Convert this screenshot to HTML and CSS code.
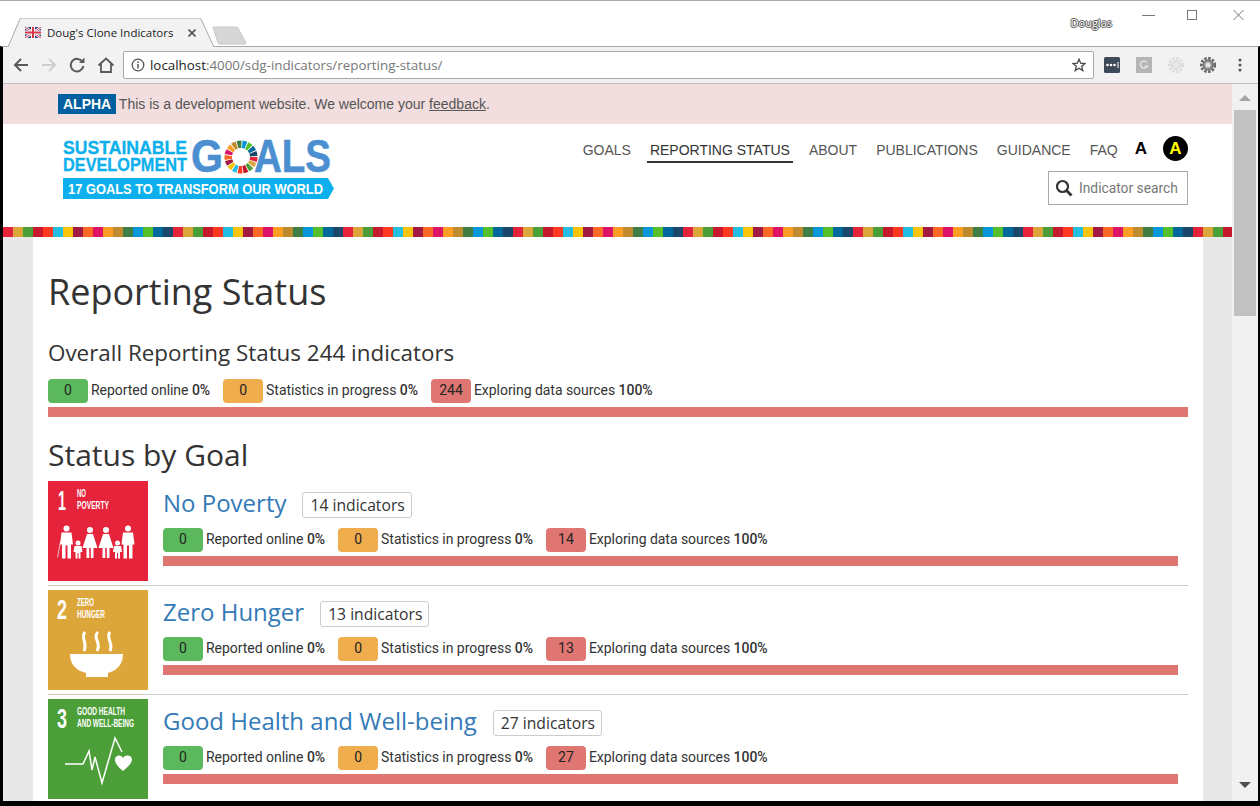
FILE: index.html
```html
<!DOCTYPE html>
<html lang="en">
<head>
    <meta charset="UTF-8">
    <title>Doug's Clone Indicators</title>
    <link rel="stylesheet" href="styles.css">
</head>
<body>

<div class="tabstrip">
    <div class="tab">
        <svg class="tab-shape" width="210" height="30" viewBox="0 0 210 30"><path d="M0 29 L12 1 Q12.500 0 14 0 L191 0 Q192.500 0 193 1 L206 29" fill="#f2f2f2" stroke="#a9a9a9"/></svg>
        <svg class="flag" width="16" height="11" viewBox="0 0 16 11">
            <rect width="16" height="11" fill="#2b3f86"/>
            <path d="M0 0 L16 11 M16 0 L0 11" stroke="#fff" stroke-width="2.500"/>
            <path d="M0 0 L16 11 M16 0 L0 11" stroke="#d8384a" stroke-width="1"/>
            <path d="M8 0 V11 M0 5.500 H16" stroke="#fff" stroke-width="4"/>
            <path d="M8 0 V11 M0 5.500 H16" stroke="#d8384a" stroke-width="2"/>
        </svg>
        <span class="tab-title">Doug's Clone Indicators</span>
        <svg class="tab-close" width="8" height="8" viewBox="0 0 8 8"><path d="M0.500 0.500 L7.500 7.500 M7.500 0.500 L0.500 7.500" stroke="#555" stroke-width="1.600"/></svg>
    </div>
    <svg class="newtab" width="36" height="20" viewBox="0 0 36 20"><path d="M1 1 L24 1 Q25 1 26 2 L34 17 Q34 18 33 18 L8 18 Q6 18 6 17 Z" fill="#d6d6d6" stroke="#c8c8c8"/></svg>
    <span class="user">Douglas</span>
    <div class="winctl">
        <svg width="14" height="12" viewBox="0 0 14 12"><path d="M0 6.500 H13" stroke="#777"/></svg>
        <svg class="win-max" width="11" height="12" viewBox="0 0 11 12"><rect x="0.500" y="1.500" width="9" height="9" fill="none" stroke="#777"/></svg>
        <svg class="win-close" width="11" height="12" viewBox="0 0 11 12"><path d="M0.500 1 L10.500 11 M10.500 1 L0.500 11" stroke="#777"/></svg>
    </div>
</div>

<div class="window">
    <div class="toolbar">
        <svg class="tool" width="16" height="16" viewBox="0 0 16 16"><path d="M15 8 H2 M8 2 L2 8 L8 14" fill="none" stroke="#5a5a5a" stroke-width="2"/></svg>
        <svg class="tool" width="16" height="16" viewBox="0 0 16 16"><path d="M1 8 H14 M8 2 L14 8 L8 14" fill="none" stroke="#cfcfcf" stroke-width="2"/></svg>
        <svg class="tool" width="16" height="16" viewBox="0 0 16 16"><path d="M13.500 5 A6.300 6.300 0 1 0 14.300 9" fill="none" stroke="#5a5a5a" stroke-width="2"/><path d="M10 6 H15.500 V0.500 Z" fill="#5a5a5a"/></svg>
        <svg class="tool" width="18" height="16" viewBox="0 0 18 16"><path d="M1.500 8.500 L9 1.500 L16.500 8.500 M4 7 V15 H14 V7" fill="none" stroke="#5a5a5a" stroke-width="1.800"/></svg>
        <div class="omnibox">
            <svg width="14" height="14" viewBox="0 0 14 14"><circle cx="7" cy="7" r="5.800" fill="none" stroke="#555" stroke-width="1.300"/><path d="M7 6 V10.500 M7 3.500 V5" stroke="#555" stroke-width="1.500"/></svg>
            <span class="url"><span class="url-host">localhost</span>:4000/sdg-indicators/reporting-status/</span>
            <svg class="star" width="14" height="14" viewBox="0 0 14 14"><path d="M7 1.200 L8.700 5.200 L13 5.500 L9.700 8.300 L10.800 12.600 L7 10.300 L3.200 12.600 L4.300 8.300 L1 5.500 L5.300 5.200 Z" fill="none" stroke="#444" stroke-width="1.300"/></svg>
        </div>
        <div class="extensions">
            <svg width="16" height="16" viewBox="0 0 16 16"><rect width="16" height="16" rx="1.500" fill="#3d4a5a"/><circle cx="3.500" cy="8" r="1.300" fill="#fff"/><circle cx="7" cy="8" r="1.300" fill="#fff"/><circle cx="10.500" cy="8" r="1.300" fill="#fff"/><path d="M14 5 V11" stroke="#fff"/></svg>
            <svg width="16" height="16" viewBox="0 0 16 16"><rect width="16" height="16" fill="#b5b5b5"/><path d="M11 5.500 A3.600 3.600 0 1 0 11.400 9 H8.500" fill="none" stroke="#eee" stroke-width="1.200"/></svg>
            <svg width="16" height="16" viewBox="0 0 16 16"><circle cx="8" cy="8" r="6.800" fill="none" stroke="#dcdcdc" stroke-width="2.600" stroke-dasharray="2.500 1.500"/><circle cx="8" cy="8" r="4.500" fill="#e6e6e6" stroke="#d4d4d4"/></svg>
            <svg width="16" height="16" viewBox="0 0 16 16"><circle cx="8" cy="8" r="6.800" fill="none" stroke="#666" stroke-width="2.600" stroke-dasharray="2.500 1.500"/><circle cx="8" cy="8" r="5" fill="#9a9a9a" stroke="#555"/><circle cx="8" cy="8" r="2.500" fill="#e4e4e4"/></svg>
            <svg class="dots" width="4" height="14" viewBox="0 0 4 14"><circle cx="2" cy="2" r="1.500" fill="#555"/><circle cx="2" cy="7" r="1.500" fill="#555"/><circle cx="2" cy="12" r="1.500" fill="#555"/></svg>
        </div>
    </div>

    <div class="viewport">
        <div class="page">
            <div class="alpha-banner"><span class="alpha-label">ALPHA</span> This is a development website. We welcome your <a href="#">feedback</a>.</div>

            <header class="site-header">
                <svg class="logo" width="272" height="62" viewBox="0 0 272 62">
                    <text class="logo-small" x="0" y="16" textLength="124" lengthAdjust="spacingAndGlyphs">SUSTAINABLE</text>
                    <text class="logo-small" x="0" y="33" textLength="124" lengthAdjust="spacingAndGlyphs">DEVELOPMENT</text>
                    <text class="logo-big" x="128" y="34" textLength="32" lengthAdjust="spacingAndGlyphs">G</text>
                    <text class="logo-big" x="191" y="34" textLength="77" lengthAdjust="spacingAndGlyphs">ALS</text>
                    <g transform="translate(178 19)" fill="none" stroke-width="7.500" stroke-dasharray="3.900 76.200">
                        <circle r="12.750" stroke="#e5243b" transform="rotate(0)"/>
                        <circle r="12.750" stroke="#dda63a" transform="rotate(21.200)"/>
                        <circle r="12.750" stroke="#4c9f38" transform="rotate(42.400)"/>
                        <circle r="12.750" stroke="#c5192d" transform="rotate(63.500)"/>
                        <circle r="12.750" stroke="#ff3a21" transform="rotate(84.700)"/>
                        <circle r="12.750" stroke="#26bde2" transform="rotate(105.900)"/>
                        <circle r="12.750" stroke="#fcc30b" transform="rotate(127.100)"/>
                        <circle r="12.750" stroke="#a21942" transform="rotate(148.200)"/>
                        <circle r="12.750" stroke="#fd6925" transform="rotate(169.400)"/>
                        <circle r="12.750" stroke="#dd1367" transform="rotate(190.600)"/>
                        <circle r="12.750" stroke="#fd9d24" transform="rotate(211.800)"/>
                        <circle r="12.750" stroke="#bf8b2e" transform="rotate(232.900)"/>
                        <circle r="12.750" stroke="#3f7e44" transform="rotate(254.100)"/>
                        <circle r="12.750" stroke="#0a97d9" transform="rotate(275.300)"/>
                        <circle r="12.750" stroke="#56c02b" transform="rotate(296.500)"/>
                        <circle r="12.750" stroke="#00689d" transform="rotate(317.600)"/>
                        <circle r="12.750" stroke="#19486a" transform="rotate(338.800)"/>
                    </g>
                    <path d="M0 40 H265 L271 50.500 L265 61 H0 Z" fill="#0db0ec"/>
                    <text class="logo-strap" x="5" y="56" textLength="255" lengthAdjust="spacingAndGlyphs">17 GOALS TO TRANSFORM OUR WORLD</text>
                </svg>
                <div class="header-right">
                    <nav class="nav">
                        <a href="#">Goals</a>
                        <a href="#" class="active">Reporting Status</a>
                        <a href="#">About</a>
                        <a href="#">Publications</a>
                        <a href="#">Guidance</a>
                        <a href="#">FAQ</a>
                        <span class="contrast-a">A</span>
                        <span class="contrast-b">A</span>
                    </nav>
                    <div class="search-box">
                        <svg width="18" height="18" viewBox="0 0 18 18"><circle cx="7.500" cy="7.500" r="5.500" fill="none" stroke="#333" stroke-width="2.200"/><path d="M11.500 11.500 L16.500 16.500" stroke="#333" stroke-width="2.800"/></svg>
                        <span>Indicator search</span>
                    </div>
                </div>
            </header>

            <div class="goal-stripe"></div>

            <main class="content">
                <h1>Reporting Status</h1>

                <h3>Overall Reporting Status 244 indicators</h3>
                <div class="status-row">
                    <span class="count green">0</span><span class="status-text">Reported online <b>0%</b></span>
                    <span class="count amber">0</span><span class="status-text">Statistics in progress <b>0%</b></span>
                    <span class="count red">244</span><span class="status-text">Exploring data sources <b>100%</b></span>
                </div>
                <div class="bar"></div>

                <h2>Status by Goal</h2>

                <div class="goal-row">
                    <svg class="tile" width="100" height="100" viewBox="0 0 100 100">
                        <rect width="100" height="100" fill="#e5243b"/>
                        <text class="tile-num" x="10" y="29" textLength="8" lengthAdjust="spacingAndGlyphs">1</text>
                        <text class="tile-name" x="29" y="16" textLength="9" lengthAdjust="spacingAndGlyphs">NO</text>
                        <text class="tile-name" x="29" y="28" textLength="32" lengthAdjust="spacingAndGlyphs">POVERTY</text>
                        <g fill="#fff">
                            <g transform="translate(18.500 47.500)"><circle r="3"/><path d="M-5 4 H5 L6.500 16 H4.500 V30 H1 V17 H-1 V30 H-4.500 V16 H-6.500 Z"/><path d="M-6 13 L-9 29" stroke="#fff" stroke-width="0.700"/></g>
                            <g transform="translate(30 62)"><circle r="2.500"/><path d="M-3.500 3 H3.500 L4.500 9 H2.500 V15.500 H0.500 V10 H-0.500 V15.500 H-2.500 V9 H-4.500 Z"/></g>
                            <g transform="translate(42 49)"><circle r="3"/><path d="M-3 4 H3 L7.500 18 H3.500 V28 H0.800 V18 H-0.800 V28 H-3.500 V18 H-7.500 Z"/></g>
                            <g transform="translate(58 49)"><circle r="3"/><path d="M-3 4 H3 L7.500 18 H3.500 V28 H0.800 V18 H-0.800 V28 H-3.500 V18 H-7.500 Z"/></g>
                            <g transform="translate(69.500 62)"><circle r="2.500"/><path d="M-3.500 3 H3.500 L4.500 9 H2.500 V15.500 H0.500 V10 H-0.500 V15.500 H-2.500 V9 H-4.500 Z"/></g>
                            <g transform="translate(80 47.500)"><circle r="3"/><path d="M-5 4 H5 L6.500 16 H4.500 V30 H1 V17 H-1 V30 H-4.500 V16 H-6.500 Z"/></g>
                        </g>
                    </svg>
                    <div class="goal-body">
                        <div class="goal-head"><a href="#" class="goal-title">No Poverty</a><span class="goal-count">14 indicators</span></div>
                        <div class="status-row">
                            <span class="count green">0</span><span class="status-text">Reported online <b>0%</b></span>
                            <span class="count amber">0</span><span class="status-text">Statistics in progress <b>0%</b></span>
                            <span class="count red">14</span><span class="status-text">Exploring data sources <b>100%</b></span>
                        </div>
                        <div class="bar"></div>
                    </div>
                </div>

                <div class="goal-row">
                    <svg class="tile" width="100" height="100" viewBox="0 0 100 100">
                        <rect width="100" height="100" fill="#dda63a"/>
                        <text class="tile-num" x="9" y="29" textLength="10" lengthAdjust="spacingAndGlyphs">2</text>
                        <text class="tile-name" x="29" y="16" textLength="17" lengthAdjust="spacingAndGlyphs">ZERO</text>
                        <text class="tile-name" x="29" y="28" textLength="28" lengthAdjust="spacingAndGlyphs">HUNGER</text>
                        <path d="M22 64 H75 C75 76 67 81 60 83 V87 H38 V83 C30 81 22 76 22 64 Z" fill="#fff"/>
                        <path d="M37 42 C32 48 40 53 36 61 M50 42 C44 48 54 53 49 61 M62 42 C57 48 66 53 62 61" fill="none" stroke="#fff" stroke-width="3"/>
                    </svg>
                    <div class="goal-body">
                        <div class="goal-head"><a href="#" class="goal-title">Zero Hunger</a><span class="goal-count">13 indicators</span></div>
                        <div class="status-row">
                            <span class="count green">0</span><span class="status-text">Reported online <b>0%</b></span>
                            <span class="count amber">0</span><span class="status-text">Statistics in progress <b>0%</b></span>
                            <span class="count red">13</span><span class="status-text">Exploring data sources <b>100%</b></span>
                        </div>
                        <div class="bar"></div>
                    </div>
                </div>

                <div class="goal-row">
                    <svg class="tile" width="100" height="100" viewBox="0 0 100 100">
                        <rect width="100" height="100" fill="#4c9f38"/>
                        <text class="tile-num" x="9" y="29" textLength="10" lengthAdjust="spacingAndGlyphs">3</text>
                        <text class="tile-name" x="29" y="16" textLength="48" lengthAdjust="spacingAndGlyphs">GOOD HEALTH</text>
                        <text class="tile-name" x="29" y="28" textLength="57" lengthAdjust="spacingAndGlyphs">AND WELL-BEING</text>
                        <path d="M17 65 H35 L41 52 L44 71 L47 58 L54 84 L67 39 L74 53" fill="none" stroke="#fff" stroke-width="1.500"/>
                        <path d="M75 72 C68 66 67 63 67 60.500 C67 56 73 55 75 59 C77 55 84 56 84 60.500 C84 63 82 66 75 72 Z" fill="#fff"/>
                    </svg>
                    <div class="goal-body">
                        <div class="goal-head"><a href="#" class="goal-title">Good Health and Well-being</a><span class="goal-count">27 indicators</span></div>
                        <div class="status-row">
                            <span class="count green">0</span><span class="status-text">Reported online <b>0%</b></span>
                            <span class="count amber">0</span><span class="status-text">Statistics in progress <b>0%</b></span>
                            <span class="count red">27</span><span class="status-text">Exploring data sources <b>100%</b></span>
                        </div>
                        <div class="bar"></div>
                    </div>
                </div>
            </main>
        </div>

        <div class="scrollbar">
            <span class="arrow-up"></span>
            <div class="thumb"></div>
            <span class="arrow-down"></span>
        </div>
    </div>
</div>

</body>
</html>
```

FILE: styles.css
```css
html, body {
    margin: 0;
    padding: 0;
    height: 100%;
    overflow: hidden;
}

body {
    display: flex;
    flex-direction: column;
    background-color: #fff;
    font-family: 'Liberation Sans', Arial, sans-serif;
}

a {
    color: inherit;
}

/* browser title bar */
.tabstrip {
    height: 46px;
    flex: none;
    box-sizing: border-box;
    border-top: 1px solid #ababab;
    display: flex;
    position: relative;
}

.tab {
    position: relative;
    width: 210px;
    margin: 17px 0 0 8px;
    height: 29px;
    display: flex;
    align-items: center;
    padding-left: 17px;
    box-sizing: border-box;
}

.tab-shape {
    position: absolute;
    left: 0;
    top: 0;
}

.flag,
.tab-title,
.tab-close {
    position: relative;
}

.tab-title {
    margin-left: 6px;
    font-family: 'Open Sans', sans-serif;
    font-size: 11.500px;
    color: #222;
    white-space: nowrap;
}

.tab-close {
    margin-left: 15px;
}

.newtab {
    margin: 25px 0 0 -6px;
}

.user {
    margin: 14px 0 0 auto;
    font-family: 'Open Sans', sans-serif;
    font-size: 11px;
    color: #fff;
    height: 16px;
    line-height: 16px;
    text-shadow: 1px 0 0 #555, -1px 0 0 #555, 0 1px 0 #555, 0 -1px 0 #555;
}

.winctl {
    display: flex;
    margin: 8px 16px 0 30px;
    height: 12px;
}

.win-max {
    margin-left: 31px;
}

.win-close {
    margin-left: 35px;
}

/* everything under the title bar, in the black window frame */
.window {
    flex: 1;
    min-height: 0;
    display: flex;
    flex-direction: column;
    border-top: 1px solid #ababab;
    border-left: 3px solid #000;
    border-right: 2px solid #000;
    border-bottom: 5px solid #000;
    box-sizing: border-box;
}

.toolbar {
    height: 36px;
    flex: none;
    border-bottom: 1px solid #bcbcbc;
    background-color: #f2f2f2;
    display: flex;
    align-items: center;
    padding-left: 10px;
    gap: 0;
}

.tool {
    margin-right: 12px;
}

.omnibox {
    height: 28px;
    width: 971px;
    margin-left: -4px;
    box-sizing: border-box;
    border: 1px solid #a9a9a9;
    border-radius: 2px;
    background-color: #fff;
    display: flex;
    align-items: center;
    padding: 0 7px;
}

.url {
    margin-left: 5px;
    font-family: 'Open Sans', sans-serif;
    font-size: 13.350px;
    color: #777;
    flex: 1;
}

.url-host {
    color: #222;
}

.extensions {
    display: flex;
    align-items: center;
    gap: 16px;
    margin-left: 10px;
}

.dots {
    margin-left: 6px;
}

.viewport {
    flex: 1;
    min-height: 0;
    display: flex;
}

.page {
    flex: 1;
    min-width: 0;
    overflow: hidden;
    background-color: #e8e8e8;
}

.alpha-banner {
    height: 40px;
    box-sizing: border-box;
    padding: 10px 0 0 55px;
    background-color: #f2dede;
    color: #555;
    font-size: 14px;
    line-height: 20px;
}

.alpha-label {
    background-color: #00609f;
    color: #fff;
    font-weight: bold;
    padding: 2px 5px;
    margin-right: -1px;
}

.site-header {
    height: 103px;
    box-sizing: border-box;
    background-color: #fff;
    padding: 14px 44px 0 60px;
    display: flex;
    justify-content: space-between;
}

.logo {
    overflow: visible;
}

.logo-small {
    font-family: 'Liberation Sans', sans-serif;
    font-weight: bold;
    font-size: 17.500px;
    fill: #0db0ec;
    stroke: #0db0ec;
    stroke-width: 0.300px;
}

.logo-big {
    font-family: 'Liberation Sans', sans-serif;
    font-weight: bold;
    font-size: 47px;
    fill: #4b8fd0;
    stroke: #4b8fd0;
    stroke-width: 0.600px;
}

.logo-strap {
    font-family: 'Liberation Sans', sans-serif;
    font-weight: bold;
    font-size: 14px;
    fill: #fff;
}

.header-right {
    display: flex;
    flex-direction: column;
    align-items: flex-end;
}

.nav {
    display: flex;
    align-items: center;
    height: 25px;
    margin-top: -2px;
}

.nav a {
    margin-left: 13px;
    padding: 3px 3px 1px;
    font-size: 14px;
    line-height: 20px;
    margin-top: 3px;
    text-transform: uppercase;
    text-decoration: none;
    color: #555;
    border-bottom: 2px solid transparent;
}

.nav a.active {
    color: #333;
    border-bottom-color: #333;
}

.contrast-a {
    margin-left: 14px;
    font-size: 17px;
    font-weight: bold;
    color: #000;
}

.contrast-b {
    margin-left: 16px;
    width: 25px;
    height: 25px;
    border-radius: 50%;
    background-color: #000;
    color: #ff0;
    font-size: 17px;
    font-weight: bold;
    text-align: center;
    line-height: 25px;
}

.search-box {
    margin-top: 10px;
    width: 140px;
    height: 34px;
    box-sizing: border-box;
    border: 1px solid #aaa;
    display: flex;
    align-items: center;
    gap: 6px;
    padding-left: 6px;
    font-family: 'Roboto', sans-serif;
    font-size: 13.800px;
    color: #777;
    white-space: nowrap;
}

/* 17 goal colours, 10px each */
.goal-stripe {
    height: 10px;
    background-image: repeating-linear-gradient(90deg,
        #e5243b 0 10px, #dda63a 10px 20px, #4c9f38 20px 30px, #c5192d 30px 40px,
        #ff3a21 40px 50px, #26bde2 50px 60px, #fcc30b 60px 70px, #a21942 70px 80px,
        #fd6925 80px 90px, #dd1367 90px 100px, #fd9d24 100px 110px, #bf8b2e 110px 120px,
        #3f7e44 120px 130px, #0a97d9 130px 140px, #56c02b 140px 150px, #00689d 150px 160px,
        #19486a 160px 170px);
}

.content {
    margin: 0 29px 0 30px;
    padding: 1px 15px 0;
    background-color: #fff;
    color: #333;
    font-family: 'Open Sans', sans-serif;
    height: 600px;
}

h1 {
    margin: 30px 0 0;
    font-size: 36px;
    font-weight: 400;
    line-height: 48px;
}

h2 {
    margin: 17px 0 0;
    font-size: 30px;
    font-weight: 400;
    line-height: 42px;
}

h3 {
    margin: 21px 0 0;
    font-size: 22.400px;
    font-weight: 400;
    line-height: 32px;
}

.status-row {
    display: flex;
    align-items: center;
    height: 24px;
    margin-top: 10px;
    font-family: 'Roboto', sans-serif;
    font-size: 14px;
    color: #333;
}

.count {
    width: 40px;
    height: 24px;
    line-height: 22px;
    border-radius: 4px;
    text-align: center;
    color: #222;
}

.green { background-color: #5cb85c; }
.amber { background-color: #f0ad4e; }
.red { background-color: #e07672; }

.status-text {
    margin: 0 13px 0 3px;
    padding-bottom: 2px;
    letter-spacing: -0.040px;
}

.status-text b {
    font-weight: 500;
}

.bar {
    height: 10px;
    margin-top: 4px;
    background-color: #e07672;
}

.goal-row {
    display: flex;
    gap: 15px;
    padding-bottom: 4px;
    margin-bottom: 4px;
    border-bottom: 1px solid #ccc;
}

h2 + .goal-row {
    margin-top: 5px;
}

.tile {
    flex: none;
    display: block;
    overflow: visible;
}

.tile-num {
    font-family: 'Liberation Sans', sans-serif;
    font-weight: bold;
    font-size: 28px;
    fill: #fff;
}

.tile-name {
    font-family: 'Liberation Sans', sans-serif;
    font-weight: bold;
    font-size: 10px;
    fill: #fff;
}

.goal-body {
    flex: 1;
    min-width: 0;
    padding: 11px 10px 0 0;
}

.goal-head {
    display: flex;
    align-items: center;
    height: 26px;
    gap: 16px;
}

.goal-title {
    font-size: 24px;
    color: #337ab7;
    text-decoration: none;
    margin-bottom: 6px;
}

.goal-count {
    border: 1px solid #ccc;
    border-radius: 3px;
    padding: 0 6px 0 7px;
    height: 24px;
    line-height: 24px;
    font-size: 15.700px;
    color: #333;
}

/* page scrollbar */
.scrollbar {
    width: 26px;
    flex: none;
    background-color: #f1f1f1;
    display: flex;
    flex-direction: column;
    align-items: center;
    padding: 11px 0 13px;
    box-sizing: border-box;
}

.arrow-up {
    border: 6px solid transparent;
    border-top: 0;
    border-bottom: 6px solid #a3a3a3;
}

.arrow-down {
    margin-top: auto;
    border: 6px solid transparent;
    border-bottom: 0;
    border-top: 6px solid #505050;
}

.thumb {
    margin-top: 9px;
    width: 22px;
    height: 206px;
    background-color: #c1c1c1;
}
```
